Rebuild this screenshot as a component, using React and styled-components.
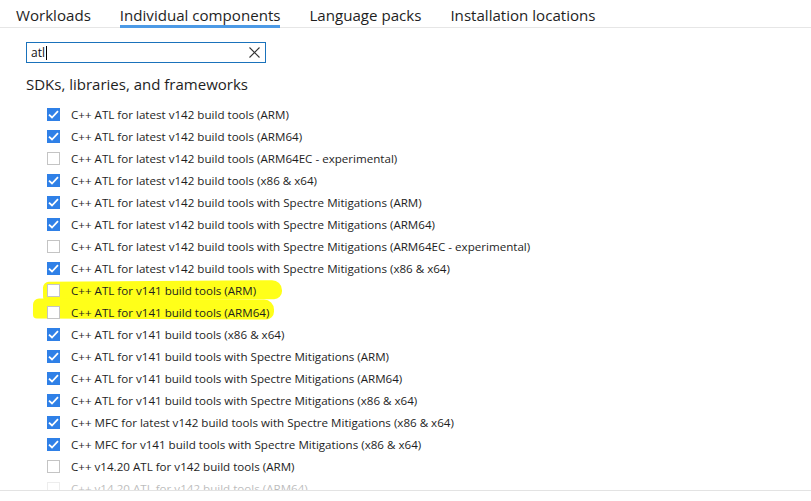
import React from 'react';
import styled, { createGlobalStyle } from 'styled-components';

const GlobalStyle = createGlobalStyle`
  html, body {
    margin: 0;
    padding: 0;
    background: #ffffff;
  }
  body {
    font-family: "Segoe UI", "Open Sans", "Noto Sans", sans-serif;
    color: #1e1e1e;
    overflow: hidden;
  }
`;

const tabs = ['Workloads', 'Individual components', 'Language packs', 'Installation locations'];

const components = [
  { label: 'C++ ATL for latest v142 build tools (ARM)', checked: true },
  { label: 'C++ ATL for latest v142 build tools (ARM64)', checked: true },
  { label: 'C++ ATL for latest v142 build tools (ARM64EC - experimental)', checked: false },
  { label: 'C++ ATL for latest v142 build tools (x86 & x64)', checked: true },
  { label: 'C++ ATL for latest v142 build tools with Spectre Mitigations (ARM)', checked: true },
  { label: 'C++ ATL for latest v142 build tools with Spectre Mitigations (ARM64)', checked: true },
  { label: 'C++ ATL for latest v142 build tools with Spectre Mitigations (ARM64EC - experimental)', checked: false },
  { label: 'C++ ATL for latest v142 build tools with Spectre Mitigations (x86 & x64)', checked: true },
  { label: 'C++ ATL for v141 build tools (ARM)', checked: false, marked: true },
  { label: 'C++ ATL for v141 build tools (ARM64)', checked: false, marked: true },
  { label: 'C++ ATL for v141 build tools (x86 & x64)', checked: true },
  { label: 'C++ ATL for v141 build tools with Spectre Mitigations (ARM)', checked: true },
  { label: 'C++ ATL for v141 build tools with Spectre Mitigations (ARM64)', checked: true },
  { label: 'C++ ATL for v141 build tools with Spectre Mitigations (x86 & x64)', checked: true },
  { label: 'C++ MFC for latest v142 build tools with Spectre Mitigations (x86 & x64)', checked: true },
  { label: 'C++ MFC for v141 build tools with Spectre Mitigations (x86 & x64)', checked: true },
  { label: 'C++ v14.20 ATL for v142 build tools (ARM)', checked: false },
  { label: 'C++ v14.20 ATL for v142 build tools (ARM64)', checked: false, faded: true },
];

const CheckIcon = () => (
  <svg width="11" height="9" viewBox="0 0 11 9">
    <path d="M1 4.6 L4 7.5 L10 1.2" fill="none" stroke="#ffffff" strokeWidth="1.8" />
  </svg>
);

const ClearIcon = () => (
  <svg width="11" height="11" viewBox="0 0 11 11">
    <path d="M0.5 0.5 L10.5 10.5 M10.5 0.5 L0.5 10.5" stroke="#333333" strokeWidth="1.1" />
  </svg>
);

const Row = ({ item }) => (
  <ItemRow $faded={item.faded}>
    <Checkbox $checked={item.checked}>{item.checked && <CheckIcon />}</Checkbox>
    <Label>{item.label}</Label>
  </ItemRow>
);

const App = () => {
  const before = components.slice(0, 8);
  const marked = components.filter((c) => c.marked);
  const after = components.slice(10);

  return (
    <Page>
      <GlobalStyle />
      <TabBar>
        {tabs.map((t, i) => (
          <Tab key={t} $active={i === 1}>
            {t}
          </Tab>
        ))}
      </TabBar>
      <Content>
        <SearchBox>
          <SearchInput>
            atl<Caret />
          </SearchInput>
          <ClearIcon />
        </SearchBox>
        <Heading>SDKs, libraries, and frameworks</Heading>
        <List>
          {before.map((c) => (
            <Row key={c.label} item={c} />
          ))}
          <MarkerGroup>
            <Stroke $top={-4} $left={-4} $width={239} $height={19} $rotate={-0.4} />
            <Stroke $top={14} $left={-14} $width={241} $height={20} $rotate={0.3} />
            {marked.map((c) => (
              <Row key={c.label} item={c} />
            ))}
          </MarkerGroup>
          {after.map((c) => (
            <Row key={c.label} item={c} />
          ))}
        </List>
      </Content>
      <BottomRule />
    </Page>
  );
};

export default App;

const Page = styled.div`
  width: 811px;
  height: 501px;
  position: relative;
  overflow: hidden;
  background: #ffffff;
`;

const TabBar = styled.div`
  display: flex;
  gap: 29px;
  height: 28px;
  padding-left: 16px;
  border-bottom: 1px solid #e6e6e6;
  box-sizing: border-box;
`;

const Tab = styled.div`
  font-size: 15.1px;
  line-height: 1;
  height: 28px;
  box-sizing: border-box;
  padding-top: 8px;
  margin-bottom: -1px;
  color: #1e1e1e;
  white-space: nowrap;
  border-bottom: 3px solid ${(p) => (p.$active ? '#4c9ae6' : 'transparent')};
`;

const Content = styled.div`
  padding: 14px 0 0 26px;
`;

const SearchBox = styled.div`
  width: 240px;
  height: 21px;
  box-sizing: border-box;
  border: 1px solid #1a72bb;
  display: flex;
  align-items: center;
  justify-content: space-between;
  padding: 0 5px 0 4px;
`;

const SearchInput = styled.div`
  font-size: 12px;
  color: #111111;
  display: flex;
  align-items: center;
`;

const Caret = styled.span`
  display: inline-block;
  width: 1px;
  height: 14px;
  background: #000000;
  margin-left: 1px;
`;

const Heading = styled.div`
  font-size: 15px;
  margin-top: 10px;
  height: 22px;
  line-height: 22px;
  color: #1e1e1e;
`;

const List = styled.div`
  margin-top: 8px;
  padding-left: 21px;
  display: flex;
  flex-direction: column;
`;

const ItemRow = styled.div`
  display: flex;
  align-items: center;
  gap: 11px;
  height: 22px;
  position: relative;
  opacity: ${(p) => (p.$faded ? 0.3 : 1)};
`;

const Checkbox = styled.span`
  width: 13px;
  height: 13px;
  box-sizing: border-box;
  flex: none;
  display: flex;
  align-items: center;
  justify-content: center;
  background: ${(p) => (p.$checked ? '#2f80e7' : '#ffffff')};
  border: 1px solid ${(p) => (p.$checked ? '#2f80e7' : '#c4c4c4')};
`;

const Label = styled.span`
  font-size: 11.6px;
  color: #1e1e1e;
  white-space: nowrap;
`;

const MarkerGroup = styled.div`
  position: relative;
  display: flex;
  flex-direction: column;
`;

const Stroke = styled.span`
  position: absolute;
  top: ${(p) => p.$top + 6}px;
  left: ${(p) => p.$left}px;
  width: ${(p) => p.$width}px;
  height: ${(p) => p.$height}px;
  background: #ffff19;
  border-radius: 6px 10px 8px 4px;
  transform: rotate(${(p) => p.$rotate}deg);
  z-index: 0;
  pointer-events: none;
`;

const BottomRule = styled.div`
  position: absolute;
  left: 0;
  right: 0;
  top: 490px;
  bottom: 0;
  background: #ffffff;
  border-top: 1px solid #e3e3e3;
`;
